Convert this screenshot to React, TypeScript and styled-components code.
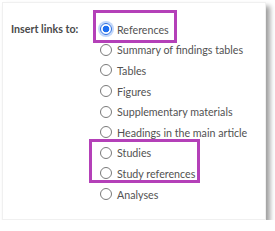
import styled, { createGlobalStyle } from "styled-components";

const GlobalStyle = createGlobalStyle`
  html, body {
    margin: 0;
    padding: 0;
    background: #ffffff;
  }
  body {
    font-family: Lato, "Liberation Sans", sans-serif;
  }
`;

const Card = styled.div`
  box-sizing: border-box;
  margin: 2px 0 0 2px;
  width: 264px;
  height: 218px;
  padding: 8px 8px 0 8px;
  background: #ffffff;
  border: 1px solid #f0f0f0;
  box-shadow: 4px 4px 5px rgba(0, 0, 0, 0.38);
  display: grid;
  grid-template-columns: 89px 1fr;
`;

const Label = styled.div`
  font-size: 10.7px;
  font-weight: 700;
  color: #4a4a4a;
  padding-top: 8px;
  line-height: 20.6px;
  white-space: nowrap;
`;

const Options = styled.div`
  display: flex;
  flex-direction: column;
  padding-top: 8px;
`;

const Group = styled.div`
  position: relative;
`;

const Highlight = styled.div<{ $l: number; $t: number; $w: number; $h: number }>`
  position: absolute;
  left: ${(p) => p.$l}px;
  top: ${(p) => p.$t}px;
  width: ${(p) => p.$w}px;
  height: ${(p) => p.$h}px;
  box-sizing: border-box;
  border: 3px solid #b440b8;
  pointer-events: none;
`;

const Option = styled.label`
  display: flex;
  align-items: center;
  gap: 5px;
  height: 20.6px;
  font-size: 10.7px;
  color: #525252;
  white-space: nowrap;
`;

const Radio = styled.span<{ $checked?: boolean }>`
  box-sizing: border-box;
  width: 12px;
  height: 12px;
  border-radius: 50%;
  flex: none;
  border: 1px solid ${(p) => (p.$checked ? "#2d6fe0" : "#7a7a7a")};
  background: ${(p) =>
    p.$checked
      ? "radial-gradient(circle, #1f6ff0 0 3.2px, #ffffff 3.6px)"
      : "#ffffff"};
  box-shadow: ${(p) => (p.$checked ? "0 0 0 2px rgba(80, 140, 240, 0.35)" : "none")};
`;

const Row = ({ text, checked }: { text: string; checked?: boolean }) => (
  <Option>
    <Radio $checked={checked} />
    {text}
  </Option>
);

export default function App() {
  return (
    <>
      <GlobalStyle />
      <Card>
        <Label>Insert links to:</Label>
        <Options>
          <Group>
            <Row text="References" checked />
            <Highlight $l={-7} $t={-9} $w={84} $h={33} />
          </Group>
          <Row text="Summary of findings tables" />
          <Row text="Tables" />
          <Row text="Figures" />
          <Row text="Supplementary materials" />
          <Row text="Headings in the main article" />
          <Group>
            <Row text="Studies" />
            <Row text="Study references" />
            <Highlight $l={-11} $t={-4} $w={111} $h={44} />
          </Group>
          <Row text="Analyses" />
        </Options>
      </Card>
    </>
  );
}
